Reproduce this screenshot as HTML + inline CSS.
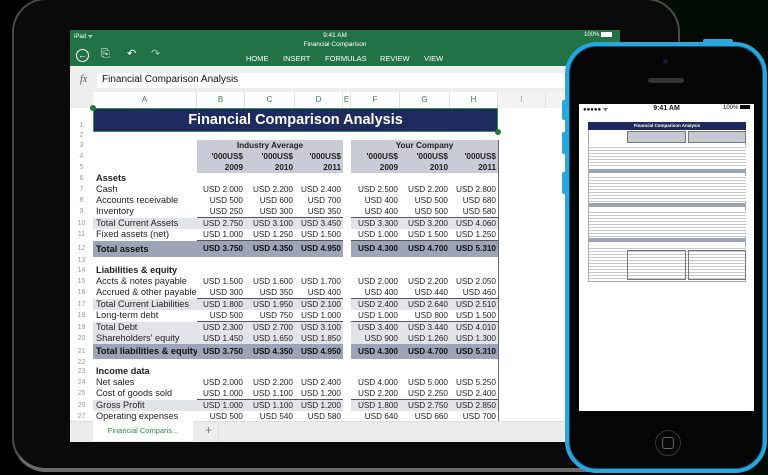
<!DOCTYPE html>
<html><head><meta charset="utf-8"><style>
*{margin:0;padding:0;box-sizing:border-box}
body{width:768px;height:475px;overflow:hidden;background:#000;font-family:"Liberation Sans",Arial,sans-serif;position:relative}
.abs{position:absolute}
.r{position:absolute;left:70px;display:flex;width:428px;font-size:8.2px;color:#222;white-space:nowrap}
.r span{display:block;overflow:hidden}
.r span:nth-child(1){width:23px;text-align:center;color:#999;font-size:7px}
.r span:nth-child(2){width:104px;padding-left:3px;font-size:9.2px}
.r span:nth-child(3){width:48px}
.r span:nth-child(4){width:50px}
.r span:nth-child(5){width:48px}
.r span:nth-child(6){width:8px}
.r span:nth-child(7){width:49px}
.r span:nth-child(8){width:50px}
.r span:nth-child(9){width:48px}
.r span:nth-child(n+3){text-align:right;padding-right:2px}
.t span:nth-child(n+2):not(:nth-child(6)){background:#e3e4ea}
.T span:nth-child(n+2):not(:nth-child(6)){background:#9ea4b8;font-weight:bold;color:#111}
.h span:nth-child(n+3):not(:nth-child(6)){background:#c9cbd6;font-weight:bold}
.u span:nth-child(n+3):not(:nth-child(6)){border-bottom:1px solid #555}
.b span:nth-child(2){font-weight:bold}
.col{position:absolute;top:92px;height:16px;font-size:8px;color:#3c7a52;text-align:center;line-height:16px;border-right:1px solid #e2e2e2;background:#fff}
</style></head><body>
<div class="abs" style="left:600px;top:0;width:168px;height:475px;background:#020c04"></div>
<div class="abs" style="left:12px;top:-2px;width:668px;height:474px;border-radius:34px;background:#0a0a0a;border:2px solid #4a4a4a;border-bottom:4px solid #6a6a6a"></div>
<div class="abs" style="left:70px;top:30px;width:550px;height:412px;background:#fff;overflow:hidden">
 <div class="abs" style="left:0;top:0;width:550px;height:36px;background:#217346;color:#fff">
  <div class="abs" style="left:4px;top:2px;font-size:6px">iPad ᯤ</div>
  <div class="abs" style="left:240px;top:2px;width:50px;text-align:center;font-size:6.5px">9:41 AM</div>
  <div class="abs" style="left:215px;top:11px;width:100px;text-align:center;font-size:6.5px">Financial Comparison</div>
  <div class="abs" style="right:8px;top:2px;font-size:6px">100% <span style="display:inline-block;width:11px;height:5px;background:#fff;vertical-align:middle"></span></div>
  <div class="abs" style="left:6px;top:19px;width:13px;height:13px;border:1.3px solid #fff;border-radius:50%;font-size:9px;line-height:10px;text-align:center">←</div>
  <div class="abs" style="left:31px;top:18px;font-size:11px">⎘</div>
  <div class="abs" style="left:57px;top:17px;font-size:11px">↶</div>
  <div class="abs" style="left:81px;top:17px;font-size:11px;opacity:.6">↷</div>
  <div class="abs" style="left:176px;top:24px;font-size:7.5px">HOME</div>
  <div class="abs" style="left:213px;top:24px;font-size:7.5px">INSERT</div>
  <div class="abs" style="left:255px;top:24px;font-size:7.5px">FORMULAS</div>
  <div class="abs" style="left:310px;top:24px;font-size:7.5px">REVIEW</div>
  <div class="abs" style="left:354px;top:24px;font-size:7.5px">VIEW</div>
 </div>
 <div class="abs" style="left:0;top:36px;width:550px;height:26px;background:#ededed"></div>
 <div class="abs" style="left:27px;top:43px;width:523px;height:15px;background:#fff"></div>
 <div class="abs" style="left:10px;top:44px;font-family:'Liberation Serif',serif;font-style:italic;font-size:10px;color:#555">fx</div>
 <div class="abs" style="left:32px;top:44px;font-size:10px;color:#111">Financial Comparison Analysis</div>
 <div class="abs" style="left:0;top:58px;width:550px;height:20px;background:#efefef"></div>
</div>
<div class="col" style="left:93px;width:104px">A</div>
<div class="col" style="left:197px;width:48px">B</div>
<div class="col" style="left:245px;width:50px">C</div>
<div class="col" style="left:295px;width:48px">D</div>
<div class="col" style="left:343px;width:8px">E</div>
<div class="col" style="left:351px;width:49px">F</div>
<div class="col" style="left:400px;width:50px">G</div>
<div class="col" style="left:450px;width:48px">H</div>
<div class="col" style="left:498px;width:48px;color:#999;background:#f3f3f3">I</div>
<div class="col" style="left:546px;width:74px;background:#f3f3f3"></div>
<div class="abs" style="left:93px;top:108px;width:405px;height:24px;background:#1e2b5e;border:1px solid #3a8a5a;color:#fff;font-weight:bold;font-size:14.5px;text-align:center;line-height:22px">Financial Comparison Analysis</div>
<div class="abs" style="left:90px;top:105px;width:6px;height:6px;border-radius:50%;background:#1f7a3e"></div>
<div class="abs" style="left:495px;top:129px;width:6px;height:6px;border-radius:50%;background:#1f7a3e"></div>
<div class="abs" style="left:70px;top:108px;width:23px;height:24px;text-align:center;line-height:36px;font-size:7px;color:#999">1</div>
<div class="abs" style="left:498px;top:140px;width:1px;height:281px;background:#666"></div>
<div class="abs" style="left:343px;top:140px;width:8px;height:281px;background:#fff"></div>

<div class="r" style="top:132px;height:8px;line-height:8px"><span>2</span></div>
<div class="r h" style="top:140px;height:11px;line-height:11px"><span>3</span><span></span><span></span><span></span><span></span><span></span><span></span><span></span><span></span></div>
<div class="abs" style="left:197px;top:140px;width:146px;height:11px;line-height:11px;text-align:center;font-size:8.2px;font-weight:bold;color:#222">Industry Average</div>
<div class="abs" style="left:351px;top:140px;width:147px;height:11px;line-height:11px;text-align:center;font-size:8.2px;font-weight:bold;color:#222">Your Company</div>
<div class="r h" style="top:151px;height:11px;line-height:11px"><span>4</span><span></span><span>'000US$</span><span>'000US$</span><span>'000US$</span><span></span><span>'000US$</span><span>'000US$</span><span>'000US$</span></div>
<div class="r h" style="top:162px;height:11px;line-height:11px"><span>5</span><span></span><span>2009</span><span>2010</span><span>2011</span><span></span><span>2009</span><span>2010</span><span>2011</span></div>
<div class="r b" style="top:173px;height:11px;line-height:11px"><span>6</span><span>Assets</span></div>
<div class="r" style="top:184px;height:11px;line-height:11px"><span>7</span><span>Cash</span><span>USD 2.000</span><span>USD 2.200</span><span>USD 2.400</span><span></span><span>USD 2.500</span><span>USD 2.200</span><span>USD 2.800</span></div>
<div class="r" style="top:195px;height:11px;line-height:11px"><span>8</span><span>Accounts receivable</span><span>USD 500</span><span>USD 600</span><span>USD 700</span><span></span><span>USD 400</span><span>USD 500</span><span>USD 680</span></div>
<div class="r u" style="top:206px;height:12px;line-height:11px"><span>9</span><span>Inventory</span><span>USD 250</span><span>USD 300</span><span>USD 350</span><span></span><span>USD 400</span><span>USD 500</span><span>USD 580</span></div>
<div class="r t" style="top:218px;height:11px;line-height:11px"><span>10</span><span>Total Current Assets</span><span>USD 2.750</span><span>USD 3.100</span><span>USD 3.450</span><span></span><span>USD 3.300</span><span>USD 3.200</span><span>USD 4.060</span></div>
<div class="r u" style="top:229px;height:12px;line-height:11px"><span>11</span><span>Fixed assets (net)</span><span>USD 1.000</span><span>USD 1.250</span><span>USD 1.500</span><span></span><span>USD 1.000</span><span>USD 1.500</span><span>USD 1.250</span></div>
<div class="r T" style="top:241px;height:16px;line-height:16px"><span>12</span><span>Total assets</span><span>USD 3.750</span><span>USD 4.350</span><span>USD 4.950</span><span></span><span>USD 4.300</span><span>USD 4.700</span><span>USD 5.310</span></div>
<div class="r" style="top:257px;height:8px;line-height:8px"><span>13</span></div>
<div class="r b" style="top:265px;height:11px;line-height:11px"><span>14</span><span>Liabilities &amp; equity</span></div>
<div class="r" style="top:276px;height:11px;line-height:11px"><span>15</span><span>Accts &amp; notes payable</span><span>USD 1.500</span><span>USD 1.600</span><span>USD 1.700</span><span></span><span>USD 2.000</span><span>USD 2.200</span><span>USD 2.050</span></div>
<div class="r u" style="top:287px;height:12px;line-height:11px"><span>16</span><span>Accrued &amp; other payable</span><span>USD 300</span><span>USD 350</span><span>USD 400</span><span></span><span>USD 400</span><span>USD 440</span><span>USD 460</span></div>
<div class="r t" style="top:299px;height:11px;line-height:11px"><span>17</span><span>Total Current Liabilities</span><span>USD 1.800</span><span>USD 1.950</span><span>USD 2.100</span><span></span><span>USD 2.400</span><span>USD 2.640</span><span>USD 2.510</span></div>
<div class="r u" style="top:310px;height:12px;line-height:11px"><span>18</span><span>Long-term debt</span><span>USD 500</span><span>USD 750</span><span>USD 1.000</span><span></span><span>USD 1.000</span><span>USD 800</span><span>USD 1.500</span></div>
<div class="r t" style="top:322px;height:11px;line-height:11px"><span>19</span><span>Total Debt</span><span>USD 2.300</span><span>USD 2.700</span><span>USD 3.100</span><span></span><span>USD 3.400</span><span>USD 3.440</span><span>USD 4.010</span></div>
<div class="r t" style="top:333px;height:11px;line-height:11px"><span>20</span><span>Shareholders' equity</span><span>USD 1.450</span><span>USD 1.650</span><span>USD 1.850</span><span></span><span>USD 900</span><span>USD 1.260</span><span>USD 1.300</span></div>
<div class="r T" style="top:344px;height:15px;line-height:15px"><span>21</span><span>Total liabilities &amp; equity</span><span>USD 3.750</span><span>USD 4.350</span><span>USD 4.950</span><span></span><span>USD 4.300</span><span>USD 4.700</span><span>USD 5.310</span></div>
<div class="r" style="top:359px;height:7px;line-height:7px"><span>22</span></div>
<div class="r b" style="top:366px;height:11px;line-height:11px"><span>23</span><span>Income data</span></div>
<div class="r" style="top:377px;height:11px;line-height:11px"><span>24</span><span>Net sales</span><span>USD 2.000</span><span>USD 2.200</span><span>USD 2.400</span><span></span><span>USD 4.000</span><span>USD 5.000</span><span>USD 5.250</span></div>
<div class="r u" style="top:388px;height:12px;line-height:11px"><span>25</span><span>Cost of goods sold</span><span>USD 1.000</span><span>USD 1.100</span><span>USD 1.200</span><span></span><span>USD 2.200</span><span>USD 2.250</span><span>USD 2.400</span></div>
<div class="r t" style="top:400px;height:11px;line-height:11px"><span>26</span><span>Gross Profit</span><span>USD 1.000</span><span>USD 1.100</span><span>USD 1.200</span><span></span><span>USD 1.800</span><span>USD 2.750</span><span>USD 2.850</span></div>
<div class="r" style="top:411px;height:10px;line-height:11px;overflow:hidden"><span>27</span><span>Operating expenses</span><span>USD 500</span><span>USD 540</span><span>USD 580</span><span></span><span>USD 640</span><span>USD 660</span><span>USD 700</span></div>
<div class="abs" style="left:70px;top:421px;width:550px;height:21px;background:#ececec;border-top:1px solid #ddd"></div>
<div class="abs" style="left:93px;top:421px;width:100px;height:20px;background:#fff;color:#2a8a4a;font-size:7.5px;text-align:center;line-height:19px">Financial Comparis...</div>
<div class="abs" style="left:199px;top:421px;width:20px;height:20px;color:#777;font-size:12px;text-align:center;line-height:18px;border-right:1px solid #ddd">+</div>

<div class="abs" style="left:562px;top:100px;width:4px;height:20px;background:#2aa6df;border-radius:2px"></div>
<div class="abs" style="left:562px;top:132px;width:4px;height:22px;background:#2aa6df;border-radius:2px"></div>
<div class="abs" style="left:562px;top:172px;width:4px;height:22px;background:#2aa6df;border-radius:2px"></div>
<div class="abs" style="left:703px;top:39px;width:30px;height:5px;background:#2aa6df;border-radius:2px"></div>
<div class="abs" style="left:565px;top:42px;width:202px;height:431px;border-radius:32px;background:#050505;border:4px solid #2aa6df;box-shadow:inset 0 0 0 1px #0d4f70"></div>
<div class="abs" style="left:663px;top:59px;width:5px;height:5px;border-radius:50%;background:#1a1a2a"></div>
<div class="abs" style="left:648px;top:78px;width:36px;height:5px;border-radius:3px;background:#333"></div>
<div class="abs" style="left:655px;top:430px;width:26px;height:26px;border-radius:50%;border:1px solid #333;background:#070707"></div>
<div class="abs" style="left:662px;top:437px;width:12px;height:12px;border-radius:3px;border:1px solid #666"></div>
<div class="abs" style="left:579px;top:104px;width:175px;height:307px;background:#fff;overflow:hidden">
 <div class="abs" style="left:4px;top:1px;font-size:6px;color:#000">●●●●● ᯤ</div>
 <div class="abs" style="left:0;top:1px;width:175px;text-align:center;font-size:7px;font-weight:bold;color:#111">9:41 AM</div>
 <div class="abs" style="right:4px;top:1px;font-size:6px;color:#000">100% <span style="display:inline-block;width:10px;height:4px;background:#000;vertical-align:middle"></span></div>
 <div class="abs" style="left:9px;top:18px;width:158px;height:8px;background:#1e2b5e;color:#fff;font-size:4.5px;font-weight:bold;text-align:center;line-height:8px">Financial Comparison Analysis</div>
 <div class="abs" style="left:9px;top:26px;width:158px;height:152px;border:1px solid #aaa;border-top:none"></div>
 <div class="abs" style="left:48px;top:27px;width:59px;height:12px;background:#c6c8d3;border:1px solid #777"></div>
 <div class="abs" style="left:109px;top:27px;width:58px;height:12px;background:#c6c8d3;border:1px solid #777"></div>
 <div class="abs" style="left:10px;top:42px;width:157px;height:22px;background:repeating-linear-gradient(#fff 0 1px,#c8c8c8 1px 2px,#fff 2px 3px)"></div>
 <div class="abs" style="left:10px;top:65px;width:157px;height:4px;background:#9ea4b8"></div>
 <div class="abs" style="left:10px;top:72px;width:157px;height:26px;background:repeating-linear-gradient(#fff 0 1px,#c8c8c8 1px 2px,#fff 2px 3px)"></div>
 <div class="abs" style="left:10px;top:99px;width:157px;height:4px;background:#9ea4b8"></div>
 <div class="abs" style="left:10px;top:107px;width:157px;height:26px;background:repeating-linear-gradient(#fff 0 1px,#c8c8c8 1px 2px,#fff 2px 3px)"></div>
 <div class="abs" style="left:10px;top:134px;width:157px;height:4px;background:#9ea4b8"></div>
 <div class="abs" style="left:10px;top:143px;width:157px;height:32px;background:repeating-linear-gradient(#fff 0 1px,#c8c8c8 1px 2px,#fff 2px 3px)"></div>
 <div class="abs" style="left:48px;top:146px;width:59px;height:30px;border:1px solid #777"></div>
 <div class="abs" style="left:109px;top:146px;width:58px;height:30px;border:1px solid #777"></div>
</div>
</body></html>
